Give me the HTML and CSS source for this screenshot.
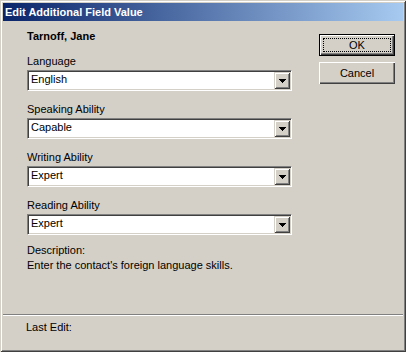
FILE: index.html
```html
<!DOCTYPE html>
<html>
<head>
<meta charset="utf-8">
<link rel="stylesheet" href="styles.css">
</head>
<body>
<div class="window">
  <div class="titlebar">Edit Additional Field Value</div>
  <div class="main">
    <div class="fields">
      <div class="contact">Tarnoff, Jane</div>
      <div class="label">Language</div>
      <div class="combo"><span class="value">English</span><span class="drop"><svg width="7" height="4" viewBox="0 0 7 4" shape-rendering="crispEdges"><rect x="0" y="0" width="7" height="1"/><rect x="1" y="1" width="5" height="1"/><rect x="2" y="2" width="3" height="1"/><rect x="3" y="3" width="1" height="1"/></svg></span></div>
      <div class="label">Speaking Ability</div>
      <div class="combo"><span class="value">Capable</span><span class="drop"><svg width="7" height="4" viewBox="0 0 7 4" shape-rendering="crispEdges"><rect x="0" y="0" width="7" height="1"/><rect x="1" y="1" width="5" height="1"/><rect x="2" y="2" width="3" height="1"/><rect x="3" y="3" width="1" height="1"/></svg></span></div>
      <div class="label">Writing Ability</div>
      <div class="combo"><span class="value">Expert</span><span class="drop"><svg width="7" height="4" viewBox="0 0 7 4" shape-rendering="crispEdges"><rect x="0" y="0" width="7" height="1"/><rect x="1" y="1" width="5" height="1"/><rect x="2" y="2" width="3" height="1"/><rect x="3" y="3" width="1" height="1"/></svg></span></div>
      <div class="label">Reading Ability</div>
      <div class="combo last"><span class="value">Expert</span><span class="drop"><svg width="7" height="4" viewBox="0 0 7 4" shape-rendering="crispEdges"><rect x="0" y="0" width="7" height="1"/><rect x="1" y="1" width="5" height="1"/><rect x="2" y="2" width="3" height="1"/><rect x="3" y="3" width="1" height="1"/></svg></span></div>
      <div class="desc-label">Description:</div>
      <div class="desc">Enter the contact's foreign language skills.</div>
    </div>
    <div class="buttons">
      <div class="btn default"><span class="focus">OK</span></div>
      <div class="btn">Cancel</div>
    </div>
  </div>
  <div class="separator"></div>
  <div class="footer">Last Edit:</div>
</div>
</body>
</html>
```
FILE: styles.css
```css
html, body {
  margin: 0;
  padding: 0;
  background: #d4d0c8;
}
body {
  font-family: "Liberation Sans", Arial, sans-serif;
  font-size: 11px;
  line-height: 13px;
  color: #000;
}
.window {
  box-sizing: border-box;
  width: 406px;
  height: 352px;
  padding: 3px;
  background: #d4d0c8;
  display: flex;
  flex-direction: column;
  box-shadow: inset 1px 1px #d4d0c8, inset -1px -1px #404040, inset 2px 2px #ffffff, inset -2px -2px #808080;
}
.titlebar {
  height: 18px;
  line-height: 18px;
  padding-left: 2px;
  color: #fff;
  font-weight: bold;
  background: linear-gradient(to right, #0a246a, #a6caf0);
}
.main {
  flex: 1;
  display: flex;
  padding-left: 24px;
}
.fields {
  width: 265px;
  padding-top: 9px;
  display: flex;
  flex-direction: column;
}
.contact {
  font-weight: bold;
  margin-bottom: 12px;
}
.label {
  margin-bottom: 2px;
}
.combo {
  box-sizing: border-box;
  height: 21px;
  background: #fff;
  border: 1px solid;
  border-color: #808080 #fff #fff #808080;
  box-shadow: inset 1px 1px #404040, inset -1px -1px #d4d0c8;
  padding: 1px;
  display: flex;
  margin-bottom: 12px;
}
.combo.last {
  margin-bottom: 9px;
}
.combo .value {
  flex: 1;
  padding-left: 2px;
  line-height: 15px;
}
.drop {
  box-sizing: border-box;
  width: 16px;
  height: 17px;
  background: #d4d0c8;
  box-shadow: inset 1px 1px #d4d0c8, inset -1px -1px #404040, inset 2px 2px #fff, inset -2px -2px #808080;
  display: flex;
  align-items: center;
  justify-content: center;
  padding-top: 1px;
}
.drop svg {
  display: block;
  fill: #000;
}
.desc-label {
  margin-bottom: 2px;
}
.buttons {
  margin-left: 27px;
  padding-top: 13px;
  display: flex;
  flex-direction: column;
  gap: 6px;
}
.btn {
  box-sizing: border-box;
  width: 76px;
  height: 22px;
  display: flex;
  align-items: center;
  justify-content: center;
  background: #d4d0c8;
  box-shadow: inset 1px 1px #fff, inset -1px -1px #404040, inset -2px -2px #808080;
}
.btn.default {
  border: 1px solid #000;
  padding: 3px;
}
.btn .focus {
  box-sizing: border-box;
  align-self: stretch;
  flex: 1;
  display: flex;
  align-items: center;
  justify-content: center;
  border: 1px dotted #000;
}
.separator {
  height: 0;
  border-top: 1px solid #808080;
  border-bottom: 1px solid #fff;
}
.footer {
  height: 33px;
  box-sizing: border-box;
  padding: 5px 0 0 23px;
}
```
